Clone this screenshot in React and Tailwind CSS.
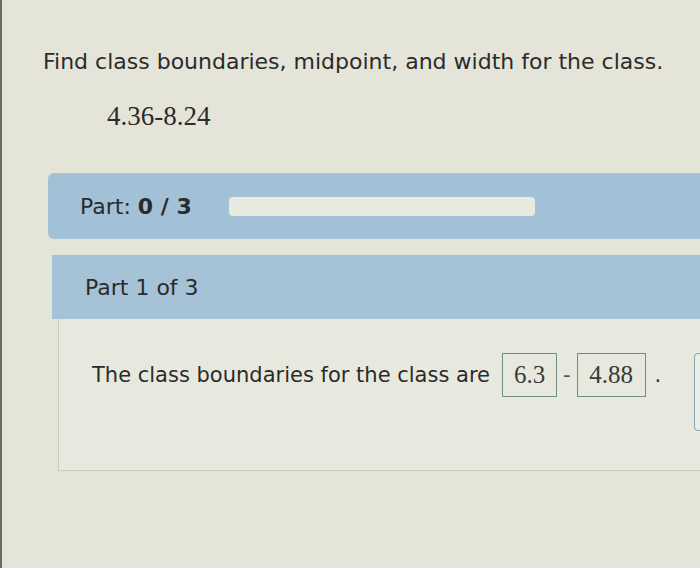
export default function App() {
  const serif = { fontFamily: '"Liberation Serif", "Times New Roman", serif' };
  return (
    <div className="w-[700px] h-[568px] overflow-hidden bg-[#e4e5d8] text-[#2b2b2b] border-l-2 border-[#6b6b66]" style={{ fontFamily: '"DejaVu Sans", Verdana, sans-serif' }}>
      <div className="pt-[47px] pl-[41px]">
        <p className="text-[22px] leading-[30px] whitespace-nowrap">Find class boundaries, midpoint, and width for the class.</p>
        <p className="mt-[22px] ml-[64px] text-[27px] leading-[34px]" style={serif}>4.36-8.24</p>
      </div>

      {/* Progress bar */}
      <div className="mt-[40px] ml-[46px] h-[66px] bg-[#a3c1d6] rounded-l-[6px] flex items-center pl-[32px]">
        <span className="text-[22px] whitespace-nowrap">Part: <b>0 / 3</b></span>
        <div className="ml-[37px] w-[306px] h-[19px] rounded-[4px] bg-[#e8eadf]" />
      </div>

      {/* Part panel */}
      <div className="mt-[16px] ml-[50px]">
        <div className="h-[64px] bg-[#a6c2d7] flex items-center pl-[33px]">
          <span className="text-[22px]">Part 1 of 3</span>
        </div>
        <div className="ml-[6px] h-[152px] bg-[#e8e9de] border-l border-b border-[#c9cbc0] pl-[33px] pt-[34px]">
          <div className="flex items-start text-[21px] whitespace-nowrap">
            <span className="mt-[7px] shrink-0">The class boundaries for the class are</span>
            <div className="shrink-0 ml-[12px] w-[55px] h-[44px] border border-[#6e8e86] flex items-center justify-center text-[25px] text-[#3a3a3a]" style={serif}>6.3</div>
            <span className="shrink-0 mx-[6px] mt-[7px] text-[#555]">-</span>
            <div className="shrink-0 w-[69px] h-[44px] border border-[#6e8e86] flex items-center justify-center text-[25px] text-[#3a3a3a]" style={serif}>4.88</div>
            <span className="shrink-0 ml-[9px] mt-[7px]">.</span>
            <div className="shrink-0 ml-[33px] w-[20px] h-[78px] border border-[#8aa7b8] rounded-l-[4px] bg-[#eceee3]" />
          </div>
        </div>
      </div>
    </div>
  );
}
